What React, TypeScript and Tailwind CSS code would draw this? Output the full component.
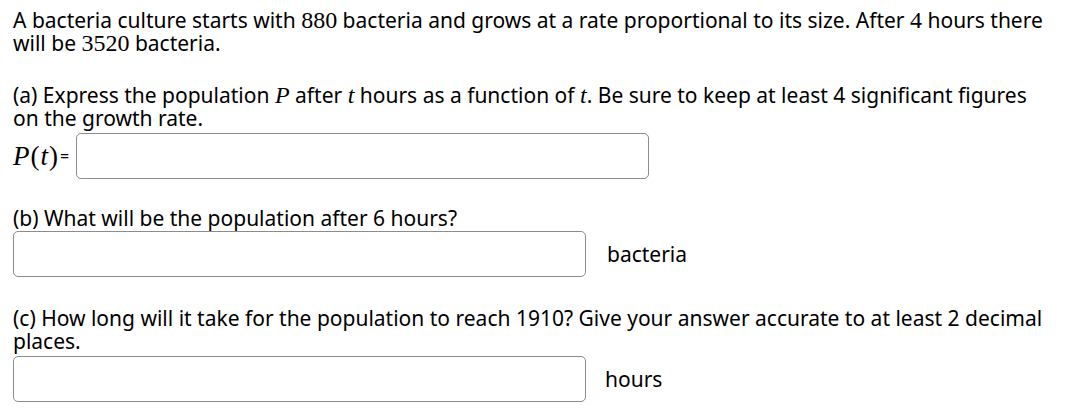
import type { ReactNode } from 'react'

const M = ({ children }: { children: ReactNode }) => (
  <span className="font-['Liberation_Serif','DejaVu_Serif',serif] text-[24px] leading-[18px]">{children}</span>
)

const V = ({ children }: { children: ReactNode }) => (
  <span className="font-['Liberation_Serif','DejaVu_Serif',serif] text-[24px] italic leading-[18px]">{children}</span>
)

function AnswerBox({ className = '' }: { className?: string }) {
  return (
    <input
      type="text"
      className={`h-[46px] rounded-[5px] border border-[#8c8c8c] bg-white px-2 outline-none ${className}`}
    />
  )
}

export default function App() {
  return (
    <div className="min-h-[414px] w-[1067px] bg-white px-[13px] pt-[9px] font-['Noto_Sans',sans-serif] text-[21px] leading-[23px] text-black">
      <p className="max-w-[1040px]">
        A bacteria culture starts with <M>880</M> bacteria and grows at a rate proportional to its size. After{' '}
        <M>4</M> hours there will be <M>3520</M> bacteria.
      </p>

      <p className="mt-[29px] max-w-[1040px]">
        (a) Express the population <V>P</V> after <V>t</V> hours as a function of <V>t</V>. Be sure to keep at
        least 4 significant figures on the growth rate.
      </p>
      <div className="mt-[3px] flex items-center">
        <span className="font-['Liberation_Serif','DejaVu_Serif',serif] text-[27px] leading-none tracking-[1px]">
          <i>P</i>(<i>t</i>)
        </span>
        <span className="ml-[1px] text-[16px] leading-none">=</span>
        <AnswerBox className="ml-[7px] w-[573px]" />
      </div>

      <p className="mt-[28px]">(b) What will be the population after 6 hours?</p>
      <div className="mt-[1px] flex items-center gap-[21px]">
        <AnswerBox className="w-[573px]" />
        <span>bacteria</span>
      </div>

      <p className="mt-[30px] max-w-[1040px]">
        (c) How long will it take for the population to reach 1910? Give your answer accurate to at least 2 decimal
        places.
      </p>
      <div className="mt-[3px] flex items-center gap-[19px]">
        <AnswerBox className="w-[573px]" />
        <span>hours</span>
      </div>
    </div>
  )
}
